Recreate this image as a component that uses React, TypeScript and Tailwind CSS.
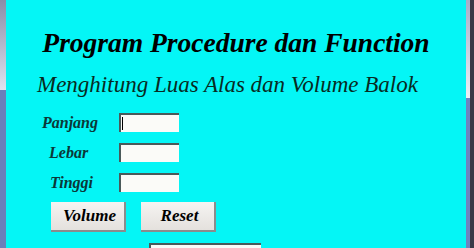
export default function App() {
  const font = { fontFamily: '"Liberation Serif", "DejaVu Serif", serif' };
  return (
    <div className="flex h-[248px] w-[474px] overflow-hidden bg-[#04f6f6]" style={font}>
      {/* left window frame */}
      <div className="flex w-[6px] flex-col">
        <div className="h-[90px] bg-gradient-to-b from-[#8a8ea8] to-[#dfe3ef]" />
        <div className="flex-1 bg-[#6a80ba]" />
      </div>

      {/* form area */}
      <div className="relative flex-1 bg-[#04f6f6]">
        <h1 className="mt-[29px] text-center text-[27.5px] font-bold italic leading-[27px] text-black">
          Program Procedure dan Function
        </h1>
        <h2 className="ml-[31px] mt-[18px] text-[23px] italic leading-[22px] text-[#082a22]">
          Menghitung Luas Alas dan Volume Balok
        </h2>

        <div className="mt-[17px] flex flex-col gap-[11px]">
          <div className="flex h-[19px] items-end">
            <span className="ml-[36px] w-[77px] text-[16px] font-semibold italic leading-[19px] text-[#0b3838]">Panjang</span>
            <div className="flex h-[19px] w-[60px] items-center border-t-2 border-l-2 border-[#4a5a5a] bg-[#fbfbf8] pl-[1px]">
              <div className="h-[13px] w-[1px] bg-black" />
            </div>
          </div>
          <div className="flex h-[19px] items-end">
            <span className="ml-[43px] w-[70px] text-[16px] font-semibold italic leading-[19px] text-[#0b3838]">Lebar</span>
            <div className="h-[19px] w-[60px] border-t-2 border-l-2 border-[#4a5a5a] bg-[#fbfbf8]" />
          </div>
          <div className="flex h-[19px] items-end">
            <span className="ml-[44px] w-[69px] text-[16px] font-semibold italic leading-[19px] text-[#0b3838]">Tinggi</span>
            <div className="h-[19px] w-[60px] border-t-2 border-l-2 border-[#4a5a5a] bg-[#fbfbf8]" />
          </div>
        </div>

        <div className="ml-[45px] mt-[10px] flex gap-[15px]">
          <button className="h-[30px] w-[75px] border-r-2 border-b-2 border-[#8a8c8c] bg-gradient-to-b from-[#f6f4f2] to-[#e4e1dd] pl-[4px] text-[17px] font-bold italic text-black">
            Volume
          </button>
          <button className="h-[30px] w-[75px] border-r-2 border-b-2 border-[#8a8c8c] bg-gradient-to-b from-[#f6f4f2] to-[#e4e1dd] pl-[4px] text-[17px] font-bold italic text-black">
            Reset
          </button>
        </div>

        <div className="ml-[143px] mt-[11px] h-[20px] w-[112px] border-t-2 border-l-2 border-[#4a5a5a] bg-[#fbfbf8]" />
      </div>

      {/* right window frame */}
      <div className="flex w-[4px] flex-col">
        <div className="h-[98px] bg-gradient-to-b from-[#a7aec8] to-[#eef0f6]" />
        <div className="flex-1 bg-[#6e84c0]" />
      </div>
      <div className="w-[4px] bg-[#3a3a48]" />
    </div>
  );
}
